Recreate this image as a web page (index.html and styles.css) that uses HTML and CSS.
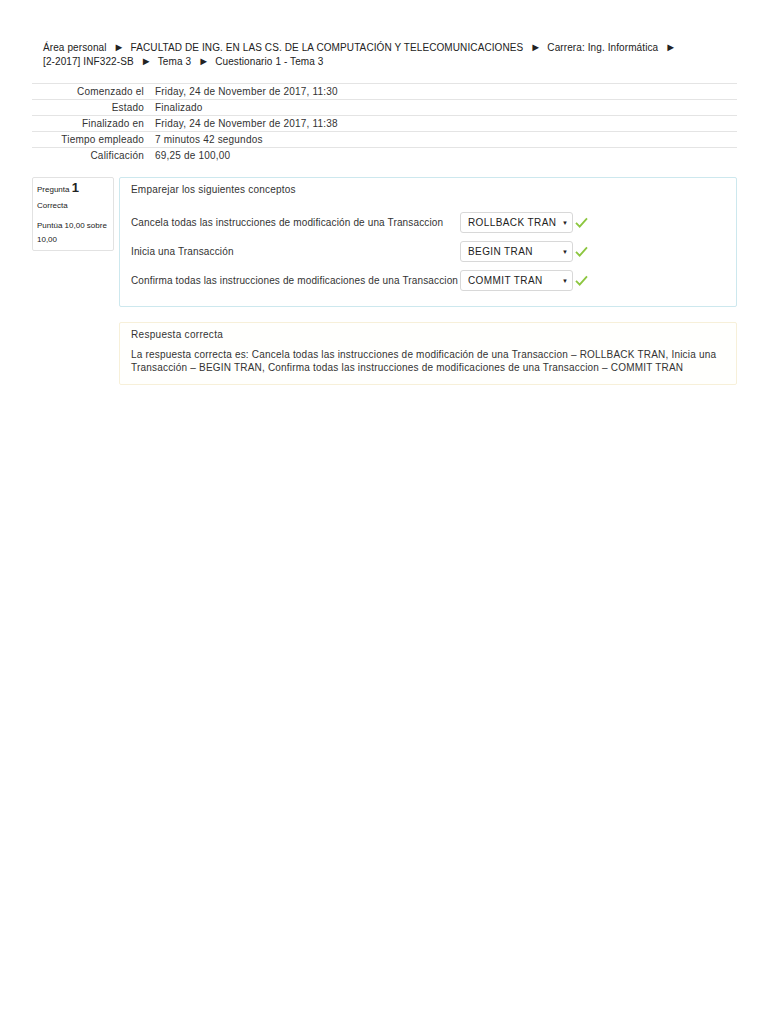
FILE: index.html
```html
<!DOCTYPE html>
<html lang="es">
<head>
<meta charset="utf-8">
<title>Cuestionario 1 - Tema 3</title>
<link rel="stylesheet" href="styles.css">
</head>
<body>
<div class="page">
  <nav class="crumbs">
    <span>Área personal</span><span class="sep">►</span><span>FACULTAD DE ING. EN LAS CS. DE LA COMPUTACIÓN Y TELECOMUNICACIONES</span><span class="sep">►</span><span>Carrera: Ing. Informática</span><span class="sep">►</span><br>
    <span>[2-2017] INF322-SB</span><span class="sep">►</span><span>Tema 3</span><span class="sep">►</span><span>Cuestionario 1 - Tema 3</span>
  </nav>

  <table class="summary">
    <tr><th>Comenzado el</th><td>Friday, 24 de November de 2017, 11:30</td></tr>
    <tr><th>Estado</th><td>Finalizado</td></tr>
    <tr><th>Finalizado en</th><td>Friday, 24 de November de 2017, 11:38</td></tr>
    <tr><th>Tiempo empleado</th><td>7 minutos 42 segundos</td></tr>
    <tr><th>Calificación</th><td>69,25 de 100,00</td></tr>
  </table>

  <div class="question">
    <div class="info">
      <div class="qno">Pregunta <span class="num">1</span></div>
      <div class="state">Correcta</div>
      <div class="grade">Puntúa 10,00 sobre 10,00</div>
    </div>
    <div class="main">
      <div class="content">
        <div class="qtext">Emparejar los siguientes conceptos</div>
        <div class="matches">
          <div class="mrow">
            <div class="mtext">Cancela todas las instrucciones de modificación de una Transaccion</div>
            <div class="sel">ROLLBACK TRAN<span class="arrow">▼</span></div>
            <svg class="check" viewBox="0 0 14 12" width="13" height="11"><path d="M1 6.5 L5 10.5 L13 1.5" fill="none" stroke="#8cc63f" stroke-width="2"/></svg>
          </div>
          <div class="mrow">
            <div class="mtext">Inicia una Transacción</div>
            <div class="sel">BEGIN TRAN<span class="arrow">▼</span></div>
            <svg class="check" viewBox="0 0 14 12" width="13" height="11"><path d="M1 6.5 L5 10.5 L13 1.5" fill="none" stroke="#8cc63f" stroke-width="2"/></svg>
          </div>
          <div class="mrow">
            <div class="mtext">Confirma todas las instrucciones de modificaciones de una Transaccion</div>
            <div class="sel">COMMIT TRAN<span class="arrow">▼</span></div>
            <svg class="check" viewBox="0 0 14 12" width="13" height="11"><path d="M1 6.5 L5 10.5 L13 1.5" fill="none" stroke="#8cc63f" stroke-width="2"/></svg>
          </div>
        </div>
      </div>
      <div class="feedback">
        <div class="ftitle">Respuesta correcta</div>
        <p class="fans">La respuesta correcta es: Cancela todas las instrucciones de modificación de una Transaccion – ROLLBACK TRAN, Inicia una Transacción – BEGIN TRAN, Confirma todas las instrucciones de modificaciones de una Transaccion – COMMIT TRAN</p>
      </div>
    </div>
  </div>
</div>
</body>
</html>
```

FILE: styles.css
```css
html, body {
  margin: 0;
  padding: 0;
  background: #ffffff;
}
body {
  font-family: "Liberation Sans", Arial, sans-serif;
  font-size: 10px;
  color: #333333;
}
.page {
  width: 705px;
  padding: 41px 0 0 32px;
}
.crumbs {
  padding-left: 11px;
  line-height: 14px;
  color: #222;
  letter-spacing: 0.1px;
}
.crumbs .sep {
  margin: 0 6px 0 7px;
  font-size: 11px;
  line-height: 10px;
}
.summary {
  margin-top: 14px;
  width: 705px;
  border-collapse: collapse;
}
.summary th, .summary td {
  border-top: 1px solid #e4e4e4;
  height: 15px;
  padding: 0;
  line-height: 15px;
  font-weight: normal;
  letter-spacing: 0.2px;
}
.summary th {
  width: 112px;
  text-align: right;
  padding-right: 11px;
}
.question {
  display: flex;
  gap: 5px;
  margin-top: 14px;
}
.info {
  width: 71px;
  height: 63px;
  border: 1px solid #e2e2e2;
  border-radius: 2px;
  padding: 4px 5px 5px 4px;
  font-size: 8px;
  flex-shrink: 0;
  color: #222;
}
.qno {
  line-height: 12px;
}
.qno .num {
  font-size: 13px;
  font-weight: bold;
}
.state {
  margin-top: 5px;
  line-height: 10px;
}
.grade {
  margin-top: 8px;
  line-height: 14px;
}
.main {
  flex: 1;
  display: flex;
  flex-direction: column;
  gap: 15px;
}
.content {
  border: 1px solid #cde8ee;
  border-radius: 2px;
  padding: 6px 11px 14px 11px;
  height: 108px;
}
.qtext {
  line-height: 12px;
  letter-spacing: 0.2px;
}
.matches {
  margin-top: 16px;
  display: flex;
  flex-direction: column;
  gap: 8px;
}
.mrow {
  display: flex;
  align-items: center;
  height: 21px;
}
.mtext {
  width: 329px;
  letter-spacing: 0.14px;
  white-space: nowrap;
}
.sel {
  width: 100px;
  height: 19px;
  border: 1px solid #d8d8d8;
  border-radius: 3px;
  padding: 0 4px 0 7px;
  display: flex;
  align-items: center;
  justify-content: space-between;
  letter-spacing: 0.4px;
  color: #222;
  background: #fff;
}
.sel .arrow {
  font-size: 6px;
  letter-spacing: 0;
}
.check {
  margin-left: 2px;
}
.feedback {
  border: 1px solid #f7f0d9;
  border-radius: 2px;
  background: #fffffd;
  padding: 6px 11px 11px 11px;
  height: 44px;
}
.ftitle {
  line-height: 12px;
  letter-spacing: 0.3px;
}
.fans {
  margin: 7px 0 0 0;
  line-height: 13px;
  letter-spacing: 0.2px;
}
```
